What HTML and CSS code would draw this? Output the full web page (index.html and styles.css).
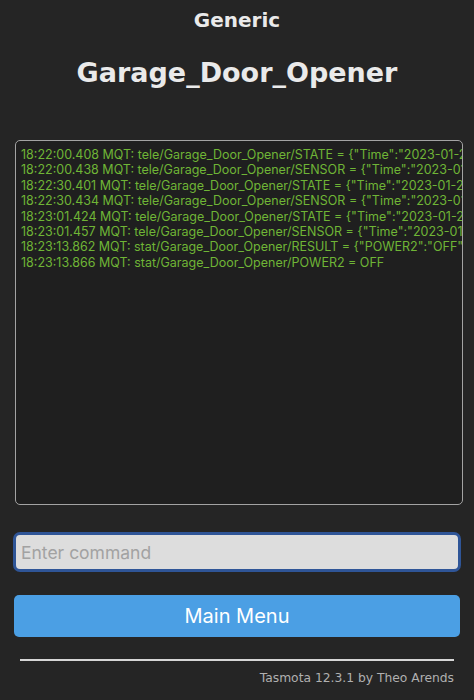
FILE: index.html
```html
<!DOCTYPE html>
<html lang="en">
<head>
    <meta charset="UTF-8">
    <meta name="viewport" content="width=device-width, initial-scale=1.0">
    <title>Garage_Door_Opener - Console</title>
    <link rel="stylesheet" href="styles.css">
</head>
<body>
    <div class="container">
        <div class="header">
            <h3>Generic</h3>
            <h2>Garage_Door_Opener</h2>
        </div>

        <div class="log" id="t1">
            <div>18:22:00.408 MQT: tele/Garage_Door_Opener/STATE = {"Time":"2023-01-22T18:22:00","Uptime":"0T00:10:12"}</div>
            <div>18:22:00.438 MQT: tele/Garage_Door_Opener/SENSOR = {"Time":"2023-01-22T18:22:00","Switch1":"OFF"}</div>
            <div>18:22:30.401 MQT: tele/Garage_Door_Opener/STATE = {"Time":"2023-01-22T18:22:30","Uptime":"0T00:10:42"}</div>
            <div>18:22:30.434 MQT: tele/Garage_Door_Opener/SENSOR = {"Time":"2023-01-22T18:22:30","Switch1":"OFF"}</div>
            <div>18:23:01.424 MQT: tele/Garage_Door_Opener/STATE = {"Time":"2023-01-22T18:23:01","Uptime":"0T00:11:13"}</div>
            <div>18:23:01.457 MQT: tele/Garage_Door_Opener/SENSOR = {"Time":"2023-01-22T18:23:01","Switch1":"OFF"}</div>
            <div>18:23:13.862 MQT: stat/Garage_Door_Opener/RESULT = {"POWER2":"OFF"}</div>
            <div>18:23:13.866 MQT: stat/Garage_Door_Opener/POWER2 = OFF</div>
        </div>

        <form class="cmd-form" onsubmit="return false;">
            <input type="text" id="c1" class="cmd" placeholder="Enter command" autocomplete="off">
        </form>

        <button class="main-button" onclick="location.href='/';">Main Menu</button>

        <div class="footer">
            <hr>
            <div class="credit">Tasmota 12.3.1 by Theo Arends</div>
        </div>
    </div>
</body>
</html>
```

FILE: styles.css
```css
body {
    margin: 0;
    background: #252525;
    color: #eaeaea;
    font-family: 'DejaVu Sans', Verdana, sans-serif;
}
.container {
    width: 446px;
    padding-left: 14px;
}
.header {
    text-align: center;
    padding-top: 8px;
}
.header h3 {
    margin: 0;
    font-size: 20px;
    line-height: 24px;
    font-weight: bold;
}
.header h2 {
    margin: 25px 0 0;
    font-size: 27px;
    line-height: 32px;
    font-weight: bold;
}
.log {
    box-sizing: border-box;
    width: 448px;
    height: 365px;
    margin: 51px 0 0 1px;
    padding: 6px 0 0 5px;
    background: #1f1f1f;
    border: 1px solid #a3a3a3;
    border-radius: 5px;
    overflow: hidden;
    color: #6fb536;
    font-family: Inter, 'Liberation Sans', Arial, sans-serif;
    font-size: 12.5px;
    line-height: 15.4px;
}
.log div {
    white-space: nowrap;
}
.cmd-form {
    margin: 27px 0 0 -1px;
}
.cmd {
    box-sizing: border-box;
    display: block;
    width: 448px;
    height: 40px;
    margin: 0;
    padding: 0 0 0 5px;
    background: #dddddd;
    border: 3px solid #2f5597;
    border-radius: 7px;
    color: #000;
    font-family: Inter, 'Liberation Sans', Arial, sans-serif;
    font-size: 17.5px;
    outline: none;
}
.cmd::placeholder {
    color: #a2a2a2;
}
.main-button {
    display: block;
    width: 446px;
    height: 42px;
    margin-top: 23px;
    padding: 0;
    border: none;
    border-radius: 5px;
    background: #4b9fe4;
    color: #fff;
    font-family: Inter, 'Liberation Sans', Arial, sans-serif;
    font-size: 20px;
    cursor: pointer;
}
.footer {
    padding: 0 6px;
}
.footer hr {
    margin: 22px 0 0;
    height: 2px;
    border: none;
    background: #d6d6d6;
}
.credit {
    text-align: right;
    font-size: 12.3px;
    line-height: 14px;
    margin-top: 10px;
    color: #b0b0b0;
}
```
